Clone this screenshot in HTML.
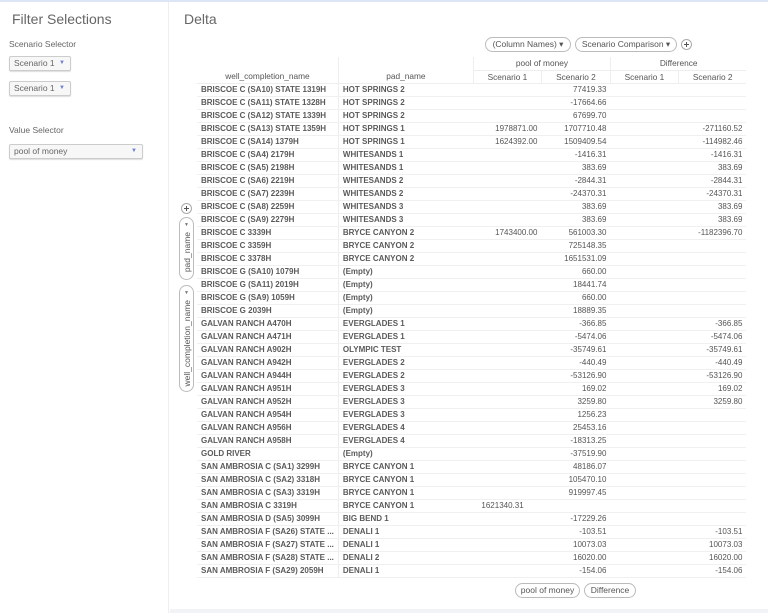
<!DOCTYPE html>
<html><head><meta charset="utf-8"><style>
*{margin:0;padding:0;box-sizing:border-box}
body{width:768px;height:613px;background:#fff;font-family:"Liberation Sans",sans-serif;color:#555;position:relative;overflow:hidden}
.top{position:absolute;left:0;top:0;width:768px;height:2px;background:#dde6f5}
.left{position:absolute;left:0;top:2px;width:169px;height:611px;border-right:1px solid #eceef3}
.bot{position:absolute;left:170px;top:609px;width:598px;height:4px;background:#f2f3f7}
.h1{position:absolute;font-size:14px;color:#666;font-weight:normal}
.lbl{position:absolute;font-size:8.5px;color:#666}
.dd{position:absolute;height:15px;border:1px solid #ccc;border-radius:2px;background:#f7f7f7;font-size:8.5px;color:#666;line-height:13px;padding-left:4px;box-shadow:0 1px 1px #ddd}
.dd i{position:absolute;right:5px;top:0;font-style:normal;color:#6b7fd0;font-size:6px}
.pill{position:absolute;height:15px;border:1px solid #bbb;border-radius:8px;font-size:8.5px;color:#555;line-height:13px;text-align:center;background:#fff}
.circ{position:absolute;width:11px;height:11px;border:1px solid #aaa;border-radius:50%;background:#fff}
.circ:before{content:"";position:absolute;left:2px;top:4px;width:5px;height:1px;background:#555}
.circ:after{content:"";position:absolute;left:4px;top:2px;width:1px;height:5px;background:#555}
table{position:absolute;left:197px;top:57px;border-collapse:collapse;font-size:8px}
td{height:13px;padding:0 4px;white-space:nowrap;overflow:hidden;border-bottom:1px solid #f0f0f0}
td.n{text-align:right;font-weight:normal;color:#555}
td.w,td.p{font-weight:bold;color:#5a5a5a}
td.p{border-left:1px solid #eee}
th{font-weight:normal;height:13px;color:#555;text-align:center;border-bottom:1px solid #eee;font-size:8.3px}
.vp{position:absolute;width:15px;border:1px solid #bbb;border-radius:8px;background:#fff}
.vp span{position:absolute;left:2px;font-size:8.5px;color:#555;writing-mode:vertical-rl;transform:rotate(180deg)}
.vp b{position:absolute;left:4px;top:4px;font-size:5px;color:#777;font-weight:normal}
</style></head><body>
<div class="top"></div>
<div class="left"></div>
<div class="bot"></div>
<div class="h1" style="left:12px;top:11px">Filter Selections</div>
<div class="lbl" style="left:9px;top:39px">Scenario Selector</div>
<div class="dd" style="left:9px;top:56px;width:62px">Scenario 1<i>▼</i></div>
<div class="dd" style="left:9px;top:81px;width:62px">Scenario 1<i>▼</i></div>
<div class="lbl" style="left:9px;top:125px">Value Selector</div>
<div class="dd" style="left:9px;top:144px;width:134px">pool of money<i>▼</i></div>
<div class="h1" style="left:184px;top:11px">Delta</div>
<div class="pill" style="left:485px;top:37px;width:86px">(Column Names) &#9662;</div>
<div class="pill" style="left:575px;top:37px;width:102px">Scenario Comparison &#9662;</div>
<div class="circ" style="left:681px;top:39px"></div>
<div class="circ" style="left:181px;top:203px"></div>
<div class="vp" style="left:179px;top:217px;height:63px"><b>▼</b><span style="top:14px">pad_name</span></div>
<div class="vp" style="left:179px;top:285px;height:107px"><b>▼</b><span style="top:14px">well_completion_name</span></div>
<div class="pill" style="left:515px;top:583px;width:65px">pool of money</div>
<div class="pill" style="left:584px;top:583px;width:52px">Difference</div>
<table>
<colgroup><col style="width:141px"><col style="width:135px"><col style="width:68px"><col style="width:69px"><col style="width:68px"><col style="width:68px"></colgroup>
<tr><th style="border-bottom:none"></th><th style="border-left:1px solid #eee;border-bottom:none"></th><th colspan="2" style="border-left:1px solid #eee">pool of money</th><th colspan="2" style="border-left:1px solid #eee">Difference</th></tr>
<tr><th>well_completion_name</th><th style="border-left:1px solid #eee">pad_name</th><th style="border-left:1px solid #eee">Scenario 1</th><th style="border-left:1px solid #eee">Scenario 2</th><th style="border-left:1px solid #eee">Scenario 1</th><th style="border-left:1px solid #eee">Scenario 2</th></tr>
<tr><td class="w">BRISCOE C (SA10) STATE 1319H</td><td class="p">HOT SPRINGS 2</td><td class="n"></td><td class="n">77419.33</td><td class="n"></td><td class="n"></td></tr>
<tr><td class="w">BRISCOE C (SA11) STATE 1328H</td><td class="p">HOT SPRINGS 2</td><td class="n"></td><td class="n">-17664.66</td><td class="n"></td><td class="n"></td></tr>
<tr><td class="w">BRISCOE C (SA12) STATE 1339H</td><td class="p">HOT SPRINGS 2</td><td class="n"></td><td class="n">67699.70</td><td class="n"></td><td class="n"></td></tr>
<tr><td class="w">BRISCOE C (SA13) STATE 1359H</td><td class="p">HOT SPRINGS 1</td><td class="n">1978871.00</td><td class="n">1707710.48</td><td class="n"></td><td class="n">-271160.52</td></tr>
<tr><td class="w">BRISCOE C (SA14) 1379H</td><td class="p">HOT SPRINGS 1</td><td class="n">1624392.00</td><td class="n">1509409.54</td><td class="n"></td><td class="n">-114982.46</td></tr>
<tr><td class="w">BRISCOE C (SA4) 2179H</td><td class="p">WHITESANDS 1</td><td class="n"></td><td class="n">-1416.31</td><td class="n"></td><td class="n">-1416.31</td></tr>
<tr><td class="w">BRISCOE C (SA5) 2198H</td><td class="p">WHITESANDS 1</td><td class="n"></td><td class="n">383.69</td><td class="n"></td><td class="n">383.69</td></tr>
<tr><td class="w">BRISCOE C (SA6) 2219H</td><td class="p">WHITESANDS 2</td><td class="n"></td><td class="n">-2844.31</td><td class="n"></td><td class="n">-2844.31</td></tr>
<tr><td class="w">BRISCOE C (SA7) 2239H</td><td class="p">WHITESANDS 2</td><td class="n"></td><td class="n">-24370.31</td><td class="n"></td><td class="n">-24370.31</td></tr>
<tr><td class="w">BRISCOE C (SA8) 2259H</td><td class="p">WHITESANDS 3</td><td class="n"></td><td class="n">383.69</td><td class="n"></td><td class="n">383.69</td></tr>
<tr><td class="w">BRISCOE C (SA9) 2279H</td><td class="p">WHITESANDS 3</td><td class="n"></td><td class="n">383.69</td><td class="n"></td><td class="n">383.69</td></tr>
<tr><td class="w">BRISCOE C 3339H</td><td class="p">BRYCE CANYON 2</td><td class="n">1743400.00</td><td class="n">561003.30</td><td class="n"></td><td class="n">-1182396.70</td></tr>
<tr><td class="w">BRISCOE C 3359H</td><td class="p">BRYCE CANYON 2</td><td class="n"></td><td class="n">725148.35</td><td class="n"></td><td class="n"></td></tr>
<tr><td class="w">BRISCOE C 3378H</td><td class="p">BRYCE CANYON 2</td><td class="n"></td><td class="n">1651531.09</td><td class="n"></td><td class="n"></td></tr>
<tr><td class="w">BRISCOE G (SA10) 1079H</td><td class="p">(Empty)</td><td class="n"></td><td class="n">660.00</td><td class="n"></td><td class="n"></td></tr>
<tr><td class="w">BRISCOE G (SA11) 2019H</td><td class="p">(Empty)</td><td class="n"></td><td class="n">18441.74</td><td class="n"></td><td class="n"></td></tr>
<tr><td class="w">BRISCOE G (SA9) 1059H</td><td class="p">(Empty)</td><td class="n"></td><td class="n">660.00</td><td class="n"></td><td class="n"></td></tr>
<tr><td class="w">BRISCOE G 2039H</td><td class="p">(Empty)</td><td class="n"></td><td class="n">18889.35</td><td class="n"></td><td class="n"></td></tr>
<tr><td class="w">GALVAN RANCH A470H</td><td class="p">EVERGLADES 1</td><td class="n"></td><td class="n">-366.85</td><td class="n"></td><td class="n">-366.85</td></tr>
<tr><td class="w">GALVAN RANCH A471H</td><td class="p">EVERGLADES 1</td><td class="n"></td><td class="n">-5474.06</td><td class="n"></td><td class="n">-5474.06</td></tr>
<tr><td class="w">GALVAN RANCH A902H</td><td class="p">OLYMPIC TEST</td><td class="n"></td><td class="n">-35749.61</td><td class="n"></td><td class="n">-35749.61</td></tr>
<tr><td class="w">GALVAN RANCH A942H</td><td class="p">EVERGLADES 2</td><td class="n"></td><td class="n">-440.49</td><td class="n"></td><td class="n">-440.49</td></tr>
<tr><td class="w">GALVAN RANCH A944H</td><td class="p">EVERGLADES 2</td><td class="n"></td><td class="n">-53126.90</td><td class="n"></td><td class="n">-53126.90</td></tr>
<tr><td class="w">GALVAN RANCH A951H</td><td class="p">EVERGLADES 3</td><td class="n"></td><td class="n">169.02</td><td class="n"></td><td class="n">169.02</td></tr>
<tr><td class="w">GALVAN RANCH A952H</td><td class="p">EVERGLADES 3</td><td class="n"></td><td class="n">3259.80</td><td class="n"></td><td class="n">3259.80</td></tr>
<tr><td class="w">GALVAN RANCH A954H</td><td class="p">EVERGLADES 3</td><td class="n"></td><td class="n">1256.23</td><td class="n"></td><td class="n"></td></tr>
<tr><td class="w">GALVAN RANCH A956H</td><td class="p">EVERGLADES 4</td><td class="n"></td><td class="n">25453.16</td><td class="n"></td><td class="n"></td></tr>
<tr><td class="w">GALVAN RANCH A958H</td><td class="p">EVERGLADES 4</td><td class="n"></td><td class="n">-18313.25</td><td class="n"></td><td class="n"></td></tr>
<tr><td class="w">GOLD RIVER</td><td class="p">(Empty)</td><td class="n"></td><td class="n">-37519.90</td><td class="n"></td><td class="n"></td></tr>
<tr><td class="w">SAN AMBROSIA C (SA1) 3299H</td><td class="p">BRYCE CANYON 1</td><td class="n"></td><td class="n">48186.07</td><td class="n"></td><td class="n"></td></tr>
<tr><td class="w">SAN AMBROSIA C (SA2) 3318H</td><td class="p">BRYCE CANYON 1</td><td class="n"></td><td class="n">105470.10</td><td class="n"></td><td class="n"></td></tr>
<tr><td class="w">SAN AMBROSIA C (SA3) 3319H</td><td class="p">BRYCE CANYON 1</td><td class="n"></td><td class="n">919997.45</td><td class="n"></td><td class="n"></td></tr>
<tr><td class="w">SAN AMBROSIA C 3319H</td><td class="p">BRYCE CANYON 1</td><td class="n" style="text-align:left;padding-left:8px">1621340.31</td><td class="n"></td><td class="n"></td><td class="n"></td></tr>
<tr><td class="w">SAN AMBROSIA D (SA5) 3099H</td><td class="p">BIG BEND 1</td><td class="n"></td><td class="n">-17229.26</td><td class="n"></td><td class="n"></td></tr>
<tr><td class="w">SAN AMBROSIA F (SA26) STATE ...</td><td class="p">DENALI 1</td><td class="n"></td><td class="n">-103.51</td><td class="n"></td><td class="n">-103.51</td></tr>
<tr><td class="w">SAN AMBROSIA F (SA27) STATE ...</td><td class="p">DENALI 1</td><td class="n"></td><td class="n">10073.03</td><td class="n"></td><td class="n">10073.03</td></tr>
<tr><td class="w">SAN AMBROSIA F (SA28) STATE ...</td><td class="p">DENALI 2</td><td class="n"></td><td class="n">16020.00</td><td class="n"></td><td class="n">16020.00</td></tr>
<tr><td class="w">SAN AMBROSIA F (SA29) 2059H</td><td class="p">DENALI 1</td><td class="n"></td><td class="n">-154.06</td><td class="n"></td><td class="n">-154.06</td></tr>
</table>
</body></html>
